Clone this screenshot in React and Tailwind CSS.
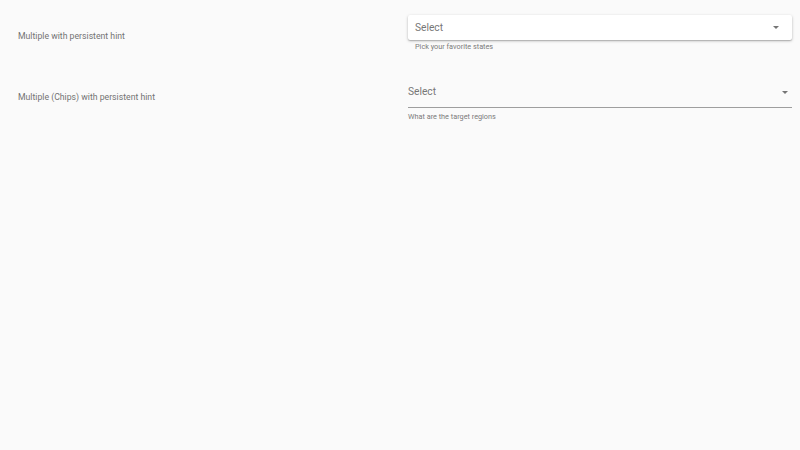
export default function App() {
  return (
    <div
      className="min-h-[450px] w-[800px] bg-[#fafafa] text-[rgba(0,0,0,0.54)]"
      style={{ fontFamily: "Roboto, 'Liberation Sans', sans-serif" }}
    >
      <div className="flex pt-[15px]">
        <div className="w-[400px] pl-[18px] pt-[15px] text-[8.7px] text-[#737373]">
          Multiple with persistent hint
        </div>
        <div className="w-[384px] ml-[8px]">
          <div className="h-[25px] bg-white rounded-[2px] shadow-[0_1px_3px_rgba(0,0,0,0.25),0_1px_1px_rgba(0,0,0,0.14)] flex items-center pl-[7px] pr-[13px]">
            <span className="flex-1 text-[10.2px] text-[#777]">Select</span>
            <svg width="6" height="3" viewBox="0 0 6 3">
              <path d="M0 0h6L3 3z" fill="#757575" />
            </svg>
          </div>
          <div className="pl-[7px] pt-[2px] text-[7.3px] text-[#7a7a7a]">Pick your favorite states</div>
        </div>
      </div>
      <div className="flex mt-[33px]">
        <div className="w-[400px] pl-[18px] pt-[5px] text-[8.7px] text-[#737373]">
          Multiple (Chips) with persistent hint
        </div>
        <div className="w-[384px] ml-[8px]">
          <div className="h-[22px] border-b border-[#9e9e9e] flex items-start pr-[4px]">
            <span className="flex-1 text-[10.2px] text-[#777] leading-[12px]">Select</span>
            <svg width="6" height="3" viewBox="0 0 6 3" className="mt-[5px]">
              <path d="M0 0h6L3 3z" fill="#757575" />
            </svg>
          </div>
          <div className="pt-[4px] text-[7.3px] text-[#7a7a7a]">What are the target regions</div>
        </div>
      </div>
    </div>
  );
}
